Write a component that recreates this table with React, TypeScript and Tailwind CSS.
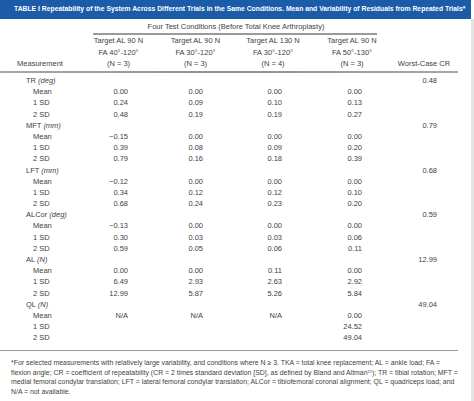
import React from "react";

type Row =
  | { kind: "group"; label: string; unit: string; cr: string }
  | { kind: "sub"; label: string; v: string[] };

const rows: Row[] = [
  { kind: "group", label: "TR", unit: "(deg)", cr: "0.48" },
  { kind: "sub", label: "Mean", v: ["0.00", "0.00", "0.00", "0.00"] },
  { kind: "sub", label: "1 SD", v: ["0.24", "0.09", "0.10", "0.13"] },
  { kind: "sub", label: "2 SD", v: ["0.48", "0.19", "0.19", "0.27"] },
  { kind: "group", label: "MFT", unit: "(mm)", cr: "0.79" },
  { kind: "sub", label: "Mean", v: ["\u22120.15", "0.00", "0.00", "0.00"] },
  { kind: "sub", label: "1 SD", v: ["0.39", "0.08", "0.09", "0.20"] },
  { kind: "sub", label: "2 SD", v: ["0.79", "0.16", "0.18", "0.39"] },
  { kind: "group", label: "LFT", unit: "(mm)", cr: "0.68" },
  { kind: "sub", label: "Mean", v: ["\u22120.12", "0.00", "0.00", "0.00"] },
  { kind: "sub", label: "1 SD", v: ["0.34", "0.12", "0.12", "0.10"] },
  { kind: "sub", label: "2 SD", v: ["0.68", "0.24", "0.23", "0.20"] },
  { kind: "group", label: "ALCor", unit: "(deg)", cr: "0.59" },
  { kind: "sub", label: "Mean", v: ["\u22120.13", "0.00", "0.00", "0.00"] },
  { kind: "sub", label: "1 SD", v: ["0.30", "0.03", "0.03", "0.06"] },
  { kind: "sub", label: "2 SD", v: ["0.59", "0.05", "0.06", "0.11"] },
  { kind: "group", label: "AL", unit: "(N)", cr: "12.99" },
  { kind: "sub", label: "Mean", v: ["0.00", "0.00", "0.11", "0.00"] },
  { kind: "sub", label: "1 SD", v: ["6.49", "2.93", "2.63", "2.92"] },
  { kind: "sub", label: "2 SD", v: ["12.99", "5.87", "5.26", "5.84"] },
  { kind: "group", label: "QL", unit: "(N)", cr: "49.04" },
  { kind: "sub", label: "Mean", v: ["N/A", "N/A", "N/A", "0.00"] },
  { kind: "sub", label: "1 SD", v: ["", "", "", "24.52"] },
  { kind: "sub", label: "2 SD", v: ["", "", "", "49.04"] },
];

const heads = [
  ["Target AL 90 N", "FA 40\u00b0-120\u00b0", "(N = 3)"],
  ["Target AL 90 N", "FA 30\u00b0-120\u00b0", "(N = 3)"],
  ["Target AL 130 N", "FA 30\u00b0-120\u00b0", "(N = 4)"],
  ["Target AL 90 N", "FA 50\u00b0-130\u00b0", "(N = 3)"],
];

const padR = ["pr-[29px]", "pr-[31px]", "pr-[30px]", "pr-[30px]"];

export default function App() {
  return (
    <div
      className="w-[474px] h-[401px] bg-white text-[#424242] overflow-hidden flex"
      style={{ fontFamily: '"Liberation Sans", Arial, sans-serif' }}
    >
      <div className="w-[471px] flex flex-col">
        <div className="h-[19px] bg-[#1c5ba7] flex items-center pl-[14px] text-white font-bold text-[6.8px] whitespace-nowrap">
          TABLE I Repeatability of the System Across Different Trials in the Same Conditions. Mean and Variability of Residuals from Repeated Trials*
        </div>
        <div className="grid grid-cols-[80px_77px_77px_78px_80px_66px] text-[7.5px]">
          <div className="col-start-2 col-span-4 h-[14px] flex items-end justify-center pb-[1px] leading-[10px]">
            Four Test Conditions (Before Total Knee Arthroplasty)
          </div>
          <div className="col-start-2 col-span-4 pl-[13px] pr-[15px]">
            <div className="h-[1.5px] bg-[#9a9a9a]" />
          </div>
          <div className="col-start-1 flex items-end justify-center leading-[11.5px] pt-[0.5px]">
            Measurement
          </div>
          {heads.map((h, i) => (
            <div key={i} className="flex flex-col items-center leading-[11.5px] pt-[0.5px]">
              {h.map((t, j) => (
                <div key={j} className="whitespace-nowrap">{t}</div>
              ))}
            </div>
          ))}
          <div className="flex items-end justify-center leading-[11.5px] pt-[0.5px] pr-[2px]">
            Worst-Case CR
          </div>
          <div className="col-span-6 pt-[1.5px]">
            <div className="h-[2px] bg-gradient-to-r from-[#a8a8a8] via-[#8f8f8f] to-[#a8a8a8]" />
          </div>
          <div className="col-span-6 h-[2px]" />
          {rows.map((r, i) =>
            r.kind === "group" ? (
              <React.Fragment key={i}>
                <div className="h-[11.2px] leading-[11.2px] pl-[26px] whitespace-nowrap">
                  {r.label} <span className="italic">{r.unit}</span>
                </div>
                <div />
                <div />
                <div />
                <div />
                <div className="h-[11.2px] leading-[11.2px] text-right pr-[21px]">{r.cr}</div>
              </React.Fragment>
            ) : (
              <React.Fragment key={i}>
                <div className="h-[11.2px] leading-[11.2px] pl-[33px]">{r.label}</div>
                {r.v.map((v, j) => (
                  <div key={j} className={`h-[11.2px] leading-[11.2px] text-right ${padR[j]}`}>
                    {v}
                  </div>
                ))}
                <div />
              </React.Fragment>
            )
          )}
          <div className="col-span-6 h-[6px]" />
          <div className="col-span-6 h-px bg-[#9a9a9a]" />
        </div>
        <div className="pl-[11px] pt-[7.5px] text-[6.9px] leading-[9.6px] whitespace-nowrap">
          *For selected measurements with relatively large variability, and conditions where N &ge; 3. TKA = total knee replacement; AL = ankle load; FA =
          <br />
          flexion angle; CR = coefficient of repeatability (CR = 2 times standard deviation [SD], as defined by Bland and Altman
          <sup className="text-[4px] leading-none">21</sup>); TR = tibial rotation; MFT =
          <br />
          medial femoral condylar translation; LFT = lateral femoral condylar translation; ALCor = tibiofemoral coronal alignment; QL = quadriceps load; and
          <br />
          N/A = not available.
        </div>
      </div>
      <div className="w-[3px] mt-[19px] bg-[#e4e4e4]" />
    </div>
  );
}
